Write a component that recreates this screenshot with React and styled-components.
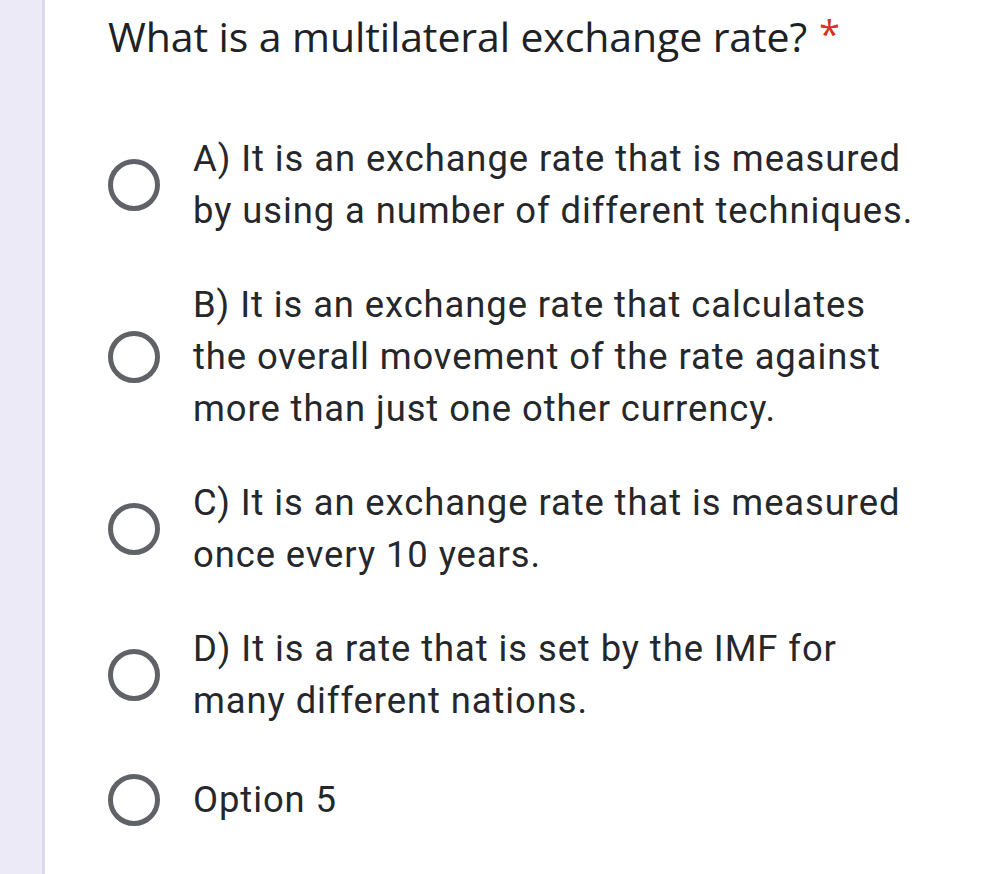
import React from "react";
import styled, { createGlobalStyle } from "styled-components";

const Global = createGlobalStyle`
  html, body { margin: 0; padding: 0; background: #ffffff; }
  body { font-family: Roboto, "Liberation Sans", sans-serif; }
`;

const Page = styled.div`
  display: flex;
  min-height: 874px;
  width: 1007px;
`;

const Strip = styled.div`
  width: 42px;
  flex: none;
  background: #edeaf7;
  border-right: 3px solid #dcdae6;
`;

const Card = styled.div`
  flex: 1;
  background: #ffffff;
  padding: 5px 85px 0 63px;
`;

const Title = styled.div`
  font-family: "Open Sans", "Liberation Sans", sans-serif;
  font-size: 41px;
  line-height: 62px;
  color: #202124;
  letter-spacing: -0.1px;
  margin-bottom: 65px;
`;

const Required = styled.span`
  color: #d93025;
  padding-left: 12px;
  font-size: 38px;
  position: relative;
  top: -4px;
`;

const Options = styled.div`
  display: flex;
  flex-direction: column;
  gap: 42px;
`;

const Row = styled.label`
  display: flex;
  align-items: center;
  min-height: ${(p) => (p.$single ? "62px" : "0")};
`;

const Radio = styled.span`
  flex: none;
  box-sizing: border-box;
  width: 52px;
  height: 52px;
  border-radius: 50%;
  border: 5px solid #5f6368;
  margin-right: 33px;
`;

const Text = styled.span`
  font-family: Roboto, "Liberation Sans", sans-serif;
  font-size: 36.4px;
  font-weight: 400;
  line-height: 52px;
  letter-spacing: 0.92px;
  color: #26272a;
`;

const options = [
  "A) It is an exchange rate that is measured by using a number of different techniques.",
  "B) It is an exchange rate that calculates the overall movement of the rate against more than just one other currency.",
  "C) It is an exchange rate that is measured once every 10 years.",
  "D) It is a rate that is set by the IMF for many different nations.",
  "Option 5",
];

export default function App() {
  return (
    <>
      <Global />
      <Page>
        <Strip />
        <Card>
          <Title>
            What is a multilateral exchange rate?
            <Required>*</Required>
          </Title>
          <Options>
            {options.map((o, i) => (
              <Row key={i} $single={i === options.length - 1}>
                <Radio />
                <Text>{o}</Text>
              </Row>
            ))}
          </Options>
        </Card>
      </Page>
    </>
  );
}
